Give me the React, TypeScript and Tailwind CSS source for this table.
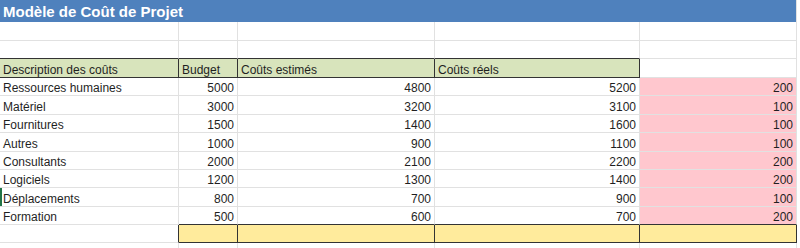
import React from "react";

const cols = ["w-[179px]", "w-[59px]", "w-[197px]", "w-[205px]", "w-[157px]"];

const rows: [string, number, number, number, number][] = [
  ["Ressources humaines", 5000, 4800, 5200, 200],
  ["Matériel", 3000, 3200, 3100, 100],
  ["Fournitures", 1500, 1400, 1600, 100],
  ["Autres", 1000, 900, 1100, 100],
  ["Consultants", 2000, 2100, 2200, 200],
  ["Logiciels", 1200, 1300, 1400, 200],
  ["Déplacements", 800, 700, 900, 100],
  ["Formation", 500, 600, 700, 200],
];

const Cell = ({
  col,
  line = "border-[#e1e1e1]",
  className = "",
  children,
}: {
  col: number;
  line?: string;
  className?: string;
  children?: React.ReactNode;
}) => (
  <div
    className={`${cols[col]} shrink-0 h-full flex items-end pb-[1px] px-[3px] border-r border-b ${line} whitespace-nowrap overflow-hidden ${className}`}
  >
    {children}
  </div>
);

const App = () => {
  return (
    <div
      className="w-[800px] h-[248px] bg-white text-[#1f1f1f] text-[12px] leading-none overflow-hidden"
      style={{ fontFamily: '"Liberation Sans", Arial, sans-serif' }}
    >
      {/* title */}
      <div className="flex h-[22px]">
        <div className="w-[797px] bg-[#4f81bd] text-white font-bold text-[15px] flex items-center pl-[3px] border-r border-[#e1e1e1]">
          Modèle de Coût de Projet
        </div>
      </div>

      {/* empty rows */}
      <div className="flex h-[19px]">
        {cols.map((_, i) => (
          <Cell key={i} col={i} />
        ))}
      </div>
      <div className="flex h-[18px]">
        {cols.map((_, i) => (
          <Cell key={i} col={i} className={i < 4 ? "border-b-[#333]" : ""} />
        ))}
      </div>

      {/* header */}
      <div className="flex h-[19px]">
        <Cell col={0} line="border-[#333]" className="bg-[#d8e4bc]">Description des coûts</Cell>
        <Cell col={1} line="border-[#333]" className="bg-[#d8e4bc]">Budget</Cell>
        <Cell col={2} line="border-[#333]" className="bg-[#d8e4bc]">Coûts estimés</Cell>
        <Cell col={3} line="border-[#333]" className="bg-[#d8e4bc]">Coûts réels</Cell>
        <Cell col={4} />
      </div>

      {/* data */}
      {rows.map((r, idx) => {
        const last = idx === rows.length - 1;
        const bb = last ? "border-b-[#333]" : "";
        return (
          <div key={r[0]} className={`flex h-[18.4px] ${idx === 6 ? "shadow-[inset_2px_0_0_#217346]" : ""}`}>
            <Cell col={0}>{r[0]}</Cell>
            <Cell col={1} className={`justify-end ${bb}`}>{r[1]}</Cell>
            <Cell col={2} className={`justify-end ${bb}`}>{r[2]}</Cell>
            <Cell col={3} className={`justify-end ${bb}`}>{r[3]}</Cell>
            <Cell col={4} className={`justify-end bg-[#ffc7ce] ${bb}`}>{r[4]}</Cell>
          </div>
        );
      })}

      {/* totals */}
      <div className="flex h-[18px]">
        <Cell col={0} className="border-r-[#333]" />
        <Cell col={1} line="border-[#333]" className="bg-[#ffeb9c]" />
        <Cell col={2} line="border-[#333]" className="bg-[#ffeb9c]" />
        <Cell col={3} line="border-[#333]" className="bg-[#ffeb9c]" />
        <Cell col={4} line="border-[#333]" className="bg-[#ffeb9c]" />
      </div>
      <div className="flex h-[18px]">
        {cols.map((_, i) => (
          <Cell key={i} col={i} />
        ))}
      </div>
    </div>
  );
};

export default App;
